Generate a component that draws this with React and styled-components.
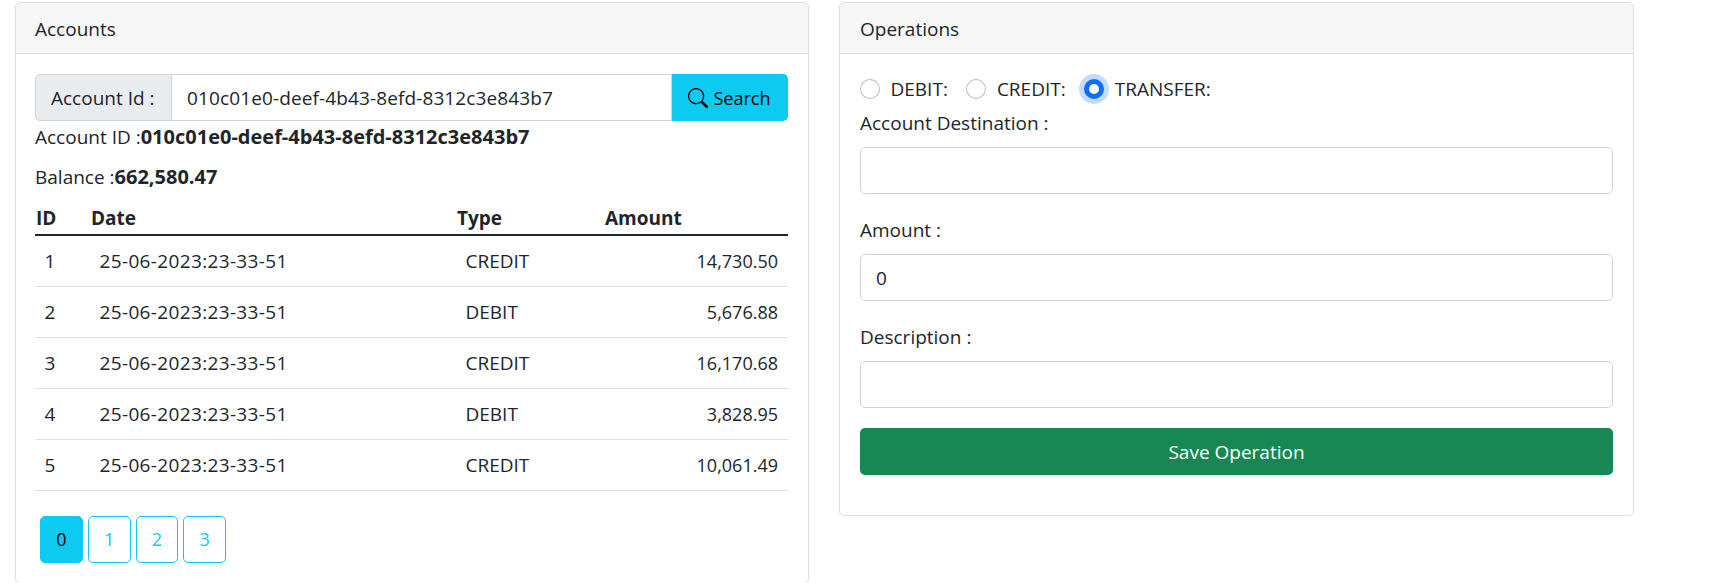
import React from "react";
import styled, { createGlobalStyle } from "styled-components";
import { BsSearch } from "react-icons/bs";

const GlobalStyle = createGlobalStyle`
  * {
    box-sizing: border-box;
  }
  body {
    margin: 0;
    background: #fff;
    color: #212529;
    font-family: "Open Sans", "Liberation Sans", sans-serif;
    font-size: 19px;
    line-height: 30px;
  }
`;

const Page = styled.div`
  display: grid;
  grid-template-columns: 794px 795px;
  column-gap: 30px;
  align-items: start;
  padding: 2px 0 0 15px;
`;

const Card = styled.section`
  border: 1px solid rgba(0, 0, 0, 0.125);
  border-radius: 5px;
  overflow: hidden;
`;

const CardHeader = styled.header`
  height: 51px;
  padding: 11px 20px 0 ${(p) => p.$left || 19}px;
  background: rgba(0, 0, 0, 0.03);
  border-bottom: 1px solid rgba(0, 0, 0, 0.125);
`;

const CardBody = styled.div`
  padding: 20px 20px ${(p) => p.$bottom || 20}px ${(p) => p.$left || 19}px;
`;

const SearchGroup = styled.div`
  display: flex;
  height: 47px;
  margin-bottom: 1px;
`;

const Addon = styled.span`
  display: flex;
  align-items: center;
  width: 137px;
  padding-left: 15px;
  background: #e9ecef;
  border: 1px solid #ced4da;
  border-radius: 5px 0 0 5px;
`;

const SearchInput = styled.input`
  flex: 1;
  min-width: 0;
  margin-left: -1px;
  padding: 0 15px;
  border: 1px solid #ced4da;
  color: #212529;
  font: inherit;
  letter-spacing: 0.12px;
  outline: none;
`;

const SearchButton = styled.button`
  display: flex;
  align-items: center;
  justify-content: center;
  gap: 6px;
  width: 116px;
  padding: 0 2px 0 0;
  border: 0;
  border-radius: 0 5px 5px 0;
  background: #0dcaf0;
  color: #000;
  font: inherit;
  font-size: 18px;
  svg {
    width: 20px;
    height: 20px;
  }
`;

const InfoLine = styled.p`
  margin: 0 0 10px;
  b {
    font-size: 20px;
  }
`;

const Table = styled.table`
  width: 100%;
  table-layout: fixed;
  border-collapse: collapse;
  margin-bottom: 25px;
`;

const HeadCell = styled.th`
  width: ${(p) => p.$width}px;
  height: 33px;
  padding: 1px;
  text-align: left;
  font-weight: 700;
  border-bottom: 2px solid #212529;
`;

const Cell = styled.td`
  height: 51px;
  padding: 0 10px 0 9.5px;
  border-bottom: 1px solid #dee2e6;
`;

const DateCell = styled(Cell)`
  letter-spacing: 0.35px;
`;

const AmountCell = styled(Cell)`
  text-align: right;
  font-size: 18px;
`;

const Pager = styled.div`
  display: flex;
  gap: 5px;
  margin-left: 5px;
`;

const PageButton = styled.button`
  width: 42.75px;
  height: 47px;
  padding: 0;
  border: 1px solid #0dcaf0;
  border-radius: 5px;
  background: ${(p) => (p.$active ? "#0dcaf0" : "#fff")};
  color: ${(p) => (p.$active ? "#000" : "#0dcaf0")};
  font: inherit;
  font-size: 18px;
`;

const RadioRow = styled.div`
  display: flex;
  align-items: center;
  height: 33px;
  padding-bottom: 3px;
`;

const RadioLabel = styled.label`
  display: flex;
  align-items: center;
  gap: 10.5px;
  margin-right: 18.5px;
`;

const Radio = styled.input`
  appearance: none;
  width: 20px;
  height: 20px;
  margin: 0;
  border-radius: 50%;
  border: 1px solid rgba(0, 0, 0, 0.25);
  background: #fff;
  &:checked {
    border: 5px solid #0d6efd;
    box-shadow: 0 0 0 5px rgba(13, 110, 253, 0.25);
  }
`;

const Field = styled.div`
  margin-bottom: 20px;
`;

const FieldLabel = styled.label`
  display: block;
  padding-top: 1px;
  margin-bottom: 9px;
`;

const TextInput = styled.input`
  display: block;
  width: 100%;
  height: 47px;
  padding: 0 15px;
  border: 1px solid #ced4da;
  border-radius: 5px;
  color: #212529;
  font: inherit;
  outline: none;
`;

const SaveButton = styled.button`
  display: block;
  width: 100%;
  height: 47px;
  border: 0;
  border-radius: 5px;
  background: #198754;
  color: #fff;
  font: inherit;
`;

const rows = [
  ["1", "CREDIT", "14,730.50"],
  ["2", "DEBIT", "5,676.88"],
  ["3", "CREDIT", "16,170.68"],
  ["4", "DEBIT", "3,828.95"],
  ["5", "CREDIT", "10,061.49"],
];

const accountId = "010c01e0-deef-4b43-8efd-8312c3e843b7";

const App = () => {
  return (
    <>
      <GlobalStyle />
      <Page>
        <Card>
          <CardHeader>Accounts</CardHeader>
          <CardBody>
            <SearchGroup>
              <Addon>Account Id :</Addon>
              <SearchInput defaultValue={accountId} />
              <SearchButton>
                <BsSearch />
                Search
              </SearchButton>
            </SearchGroup>
            <InfoLine>
              Account ID :<b>{accountId}</b>
            </InfoLine>
            <InfoLine>
              Balance :<b>662,580.47</b>
            </InfoLine>
            <Table>
              <thead>
                <tr>
                  <HeadCell $width={55}>ID</HeadCell>
                  <HeadCell $width={366}>Date</HeadCell>
                  <HeadCell $width={148}>Type</HeadCell>
                  <HeadCell>Amount</HeadCell>
                </tr>
              </thead>
              <tbody>
                {rows.map(([id, type, amount]) => (
                  <tr key={id}>
                    <Cell>{id}</Cell>
                    <DateCell>25-06-2023:23-33-51</DateCell>
                    <Cell>{type}</Cell>
                    <AmountCell>{amount}</AmountCell>
                  </tr>
                ))}
              </tbody>
            </Table>
            <Pager>
              {[0, 1, 2, 3].map((n) => (
                <PageButton key={n} $active={n === 0}>
                  {n}
                </PageButton>
              ))}
            </Pager>
          </CardBody>
        </Card>
        <Card>
          <CardHeader $left={20}>Operations</CardHeader>
          <CardBody $left={20} $bottom={40}>
            <RadioRow>
              <RadioLabel>
                <Radio type="radio" name="type" />
                DEBIT:
              </RadioLabel>
              <RadioLabel>
                <Radio type="radio" name="type" />
                CREDIT:
              </RadioLabel>
              <RadioLabel>
                <Radio type="radio" name="type" defaultChecked />
                TRANSFER:
              </RadioLabel>
            </RadioRow>
            <Field>
              <FieldLabel>Account Destination :</FieldLabel>
              <TextInput />
            </Field>
            <Field>
              <FieldLabel>Amount :</FieldLabel>
              <TextInput defaultValue="0" />
            </Field>
            <Field>
              <FieldLabel>Description :</FieldLabel>
              <TextInput />
            </Field>
            <SaveButton>Save Operation</SaveButton>
          </CardBody>
        </Card>
      </Page>
    </>
  );
};

export default App;
